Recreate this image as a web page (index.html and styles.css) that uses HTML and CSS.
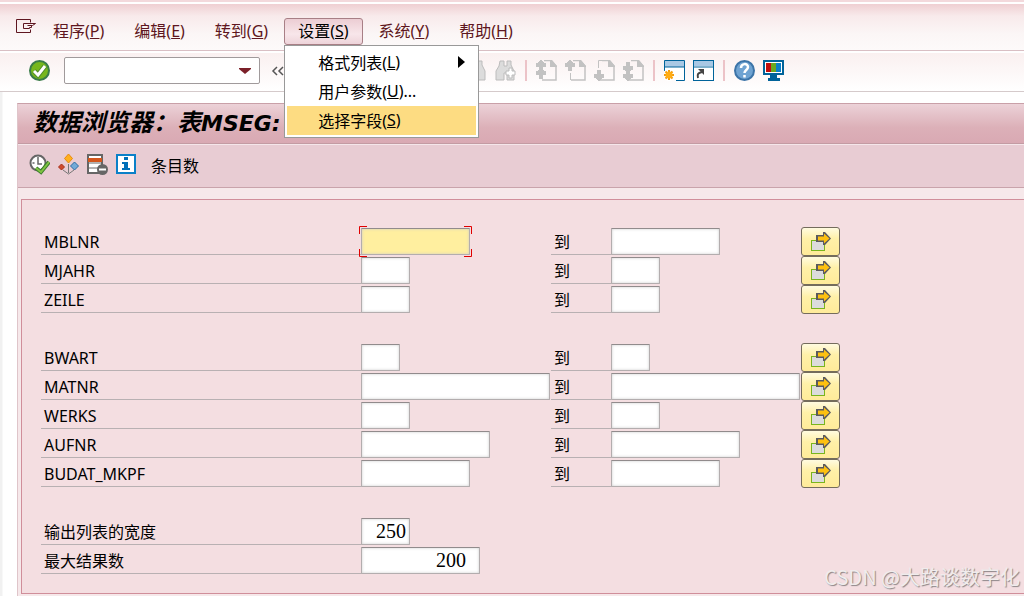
FILE: index.html
```html
<!DOCTYPE html>
<html lang="zh-CN">
<head>
  <meta charset="UTF-8">
  <title>数据浏览器：表MSEG</title>
  <link rel="stylesheet" href="styles.css">
</head>
<body>
  <!-- shared icon shapes -->
  <svg class="defs" aria-hidden="true">
    <symbol id="find" viewBox="0 0 21 21">
      <path d="M5 1h4v5h3V1h4v4l3 6v9h-7v-7H9v7H1v-9l3-5z" fill="#dcdcdc" stroke="#bcbcbc"/>
    </symbol>
    <symbol id="page" viewBox="0 0 21 21">
      <path d="M8 .500h7l5 5.500v14H6" fill="none" stroke="#c2c2c2" stroke-width="1.500"/>
      <path d="M14 0h2l5 6v1h-7z" fill="#c2c2c2"/>
    </symbol>
    <symbol id="arrow-up" viewBox="0 0 10 11">
      <path d="M4 0h2v1h1v1h1v1h2v4H7v4H3V7H0V3h2V2h1V1h1z" fill="#c2c2c2"/>
    </symbol>
    <symbol id="arrow-down" viewBox="0 0 10 11">
      <path d="M4 11h2v-1h1V9h1V8h2V4H7V0H3v4H0v4h2v1h1v1h1z" fill="#c2c2c2"/>
    </symbol>
    <symbol id="multi" viewBox="0 0 20 20">
      <rect x=".500" y="8.500" width="13" height="10" fill="#dcdcdc" stroke="#7ab51d"/>
      <path d="M5 10V3h7V0h2l6 6.500-6 6.500h-2v-3z" fill="#5a5a5f"/>
      <path d="M7 4.500h6V1.500l5.500 5-5.500 5v-3H7z" fill="#fdc010"/>
    </symbol>
  </svg>

  <nav class="menubar">
    <svg class="sys-icon" width="20" height="16" viewBox="0 0 20 16" fill="none" stroke="#5e1620">
      <path d="M14.500 3.500v-3H0.500v13h14v-3M7.500 4.500h12l-3 2h-2M7.500 4.500v5h6v-1h2v-2h-4"/>
    </svg>
    <button class="menu">程序(<u>P</u>)</button>
    <button class="menu">编辑(<u>E</u>)</button>
    <button class="menu">转到(<u>G</u>)</button>
    <div class="menu-wrap">
      <button class="menu open">设置(<u>S</u>)</button>
      <div class="dropdown">
        <button>格式列表(<u>L</u>)
          <svg width="7" height="12" viewBox="0 0 7 12"><path d="M0 0l7 6-7 6z"/></svg>
        </button>
        <button>用户参数(<u>U</u>)...</button>
        <button class="hover">选择字段(<u>S</u>)</button>
      </div>
    </div>
    <button class="menu">系统(<u>Y</u>)</button>
    <button class="menu">帮助(<u>H</u>)</button>
  </nav>

  <div class="toolbar">
    <button class="icon" aria-label="回车">
      <svg viewBox="0 0 21 21"><circle cx="10.500" cy="10.500" r="9.500" fill="#76b71d" stroke="#397c49" stroke-width="2"/><path d="M5 11l4 4 7-9" fill="none" stroke="#4f8c2a" stroke-width="5"/><path d="M5 11l4 4 7-9" fill="none" stroke="#fff" stroke-width="3"/></svg>
    </button>
    <div class="combo">
      <input type="text" aria-label="命令">
      <button aria-label="历史"><svg width="12" height="6" viewBox="0 0 12 6"><path d="M0 0h12v1L6 6 0 1z" fill="#7b2029"/></svg></button>
    </div>
    <button class="collapse" aria-label="收起"><svg width="14" height="10" viewBox="0 0 14 10" fill="none" stroke="#555" stroke-width="1.500"><path d="M6 1L2 5l4 4M12 1L8 5l4 4"/></svg></button>
    <div class="group find-group">
      <button class="icon" disabled aria-label="查找"><svg><use href="#find"/></svg></button>
      <button class="icon" disabled aria-label="查找下一个"><svg viewBox="0 0 21 21"><use href="#find"/><path d="M14 8h3v3h3v4h-3v3h-3v-3h-3v-4h3z" fill="#fff" stroke="#bcbcbc"/></svg></button>
    </div>
    <div class="group">
      <button class="icon" disabled aria-label="第一页"><svg viewBox="0 0 21 21"><use href="#page"/><use href="#arrow-up" width="10" height="11"/><use href="#arrow-up" y="8" width="10" height="11"/></svg></button>
      <button class="icon" disabled aria-label="上一页"><svg viewBox="0 0 21 21"><use href="#page"/><use href="#arrow-up" width="10" height="11"/><path d="M5.500 13v7" stroke="#c2c2c2"/></svg></button>
      <button class="icon" disabled aria-label="下一页"><svg viewBox="0 0 21 21"><use href="#page"/><use href="#arrow-down" y="10" width="10" height="11"/><path d="M4.500 8V.500H9" fill="none" stroke="#c2c2c2"/></svg></button>
      <button class="icon" disabled aria-label="最后一页"><svg viewBox="0 0 21 21"><use href="#page"/><use href="#arrow-down" y="2" width="10" height="11"/><use href="#arrow-down" y="10" width="10" height="11"/></svg></button>
    </div>
    <div class="group">
      <button class="icon" aria-label="新建会话">
        <svg viewBox="0 0 21 21"><rect x=".500" y="1" width="20" height="19" fill="#fff"/><path d="M1 1h19v6H1z" fill="#a9c8e4"/><path d="M.500 11V.500h20v20H12M0 7h20" fill="none" stroke="#00639a"/><circle cx="5" cy="15" r="6" fill="#fff"/><path d="M5 10v10M0 15h10M1.500 11.500l7 7M8.500 11.500l-7 7" stroke="#f49b0b" stroke-width="2"/><circle cx="5" cy="15" r="3.500" fill="#ffad14"/></svg>
      </button>
      <button class="icon" aria-label="创建快捷方式">
        <svg viewBox="0 0 21 21"><rect x=".500" y=".500" width="20" height="20" fill="#fff" stroke="#00639a"/><path d="M1 1h19v5H1z" fill="#a9c8e4"/><path d="M0 7h20" stroke="#00639a"/><path d="M5 18c-1-4 0-5 4-6" fill="none" stroke="#444" stroke-width="2"/><path d="M5 9h6v6z" fill="#444"/></svg>
      </button>
    </div>
    <div class="group">
      <button class="icon" aria-label="帮助">
        <svg viewBox="0 0 21 21"><circle cx="10.500" cy="10.500" r="9.500" fill="#6fa3d2" stroke="#3c74a8" stroke-width="2"/><path d="M7 8c0-5 7-5 7-1 0 3-3.500 3-3.500 6M10.500 15v2.500" fill="none" stroke="#fff" stroke-width="2.500"/></svg>
      </button>
      <button class="icon" aria-label="定制本地布局">
        <svg viewBox="0 0 21 21"><path d="M7 14h7v4h3v3H5v-3h2z" fill="#00639a"/><rect x="1" y="1" width="19" height="13" fill="#fff" stroke="#00639a" stroke-width="2"/><path d="M3 3h5v9H3z" fill="#c00d0d"/><path d="M8 3h5v9H8z" fill="#6aa820"/><path d="M13 3h5v9h-5z" fill="#0a7fc8"/></svg>
      </button>
    </div>
  </div>

  <main class="screen">
    <h1>数据浏览器：表<span>MSEG:</span></h1>

    <div class="app-bar">
      <button class="icon" aria-label="执行">
        <svg viewBox="0 0 21 21"><circle cx="9" cy="9" r="7.500" fill="#fff" stroke="#666" stroke-width="2"/><path d="M9 3v7h4M3.500 9h2" fill="none" stroke="#666" stroke-width="1.500"/><path d="M7 14l5 4 8-10" fill="none" stroke="#397c2c" stroke-width="4"/><path d="M7 14l5 4 8-10" fill="none" stroke="#80c342" stroke-width="2"/></svg>
      </button>
      <button class="icon" aria-label="选择">
        <svg viewBox="0 0 21 21"><path d="M10.500 10v9M5 16l5.500 4 5.500-4" fill="none" stroke="#777"/><path d="M10.500 0l4 4.500-4 4.500-4-4.500z" fill="#ffb01f" stroke="#e8890c"/><path d="M3.500 10l3 3-3 3-3-3z" fill="#d04a2c" stroke="#a8301a"/><path d="M16.500 8l4 4-4 4-4-4z" fill="#72aad8" stroke="#2b6ca3"/></svg>
      </button>
      <button class="icon" aria-label="删除选择行">
        <svg viewBox="0 0 21 21"><path d="M1 1h14v18H1z" fill="#fff" stroke="#666" stroke-width="2"/><path d="M1 4h14v4H1z" fill="#d4561c"/><path d="M1 9h14M1 14h10" stroke="#666" stroke-width="1"/><circle cx="15.500" cy="15.500" r="5.500" fill="#666"/><path d="M12 15.500h7" stroke="#fff" stroke-width="2"/></svg>
      </button>
      <button class="icon" aria-label="信息">
        <svg viewBox="0 0 21 21"><rect x="1" y="1" width="18" height="18" fill="#fff" stroke="#0a80c8" stroke-width="2"/><path d="M8 3h4v3H8zM6 8h6v6h2v2H6v-2h2v-4H6z" fill="#0070b8"/></svg>
      </button>
      <button class="text-btn">条目数</button>
    </div>

    <form class="panel">
      <div class="row">
        <label class="code" for="mblnr">MBLNR</label>
        <div class="field focused">
          <input class="w-date" type="text" id="mblnr">
          <svg class="focus-marks" width="113" height="31" viewBox="0 0 113 31" fill="none" stroke="#e00000"><path d="M8 .500H.500V8M105 .500h7.500V8M8 30.500H.500V23M105 30.500h7.500V23"/></svg>
        </div>
        <label for="mblnr-to">到</label>
        <div class="field"><input class="w-date" type="text" id="mblnr-to"></div>
        <button type="button" class="multi" aria-label="多项选择"><svg><use href="#multi"/></svg></button>
      </div>
      <div class="row">
        <label class="code" for="mjahr">MJAHR</label>
        <div class="field"><input class="w-year" type="text" id="mjahr"></div>
        <label for="mjahr-to">到</label>
        <div class="field"><input class="w-year" type="text" id="mjahr-to"></div>
        <button type="button" class="multi" aria-label="多项选择"><svg><use href="#multi"/></svg></button>
      </div>
      <div class="row">
        <label class="code" for="zeile">ZEILE</label>
        <div class="field"><input class="w-year" type="text" id="zeile"></div>
        <label for="zeile-to">到</label>
        <div class="field"><input class="w-year" type="text" id="zeile-to"></div>
        <button type="button" class="multi" aria-label="多项选择"><svg><use href="#multi"/></svg></button>
      </div>

      <div class="row block-start">
        <label class="code" for="bwart">BWART</label>
        <div class="field"><input class="w-type" type="text" id="bwart"></div>
        <label for="bwart-to">到</label>
        <div class="field"><input class="w-type" type="text" id="bwart-to"></div>
        <button type="button" class="multi" aria-label="多项选择"><svg><use href="#multi"/></svg></button>
      </div>
      <div class="row">
        <label class="code" for="matnr">MATNR</label>
        <div class="field"><input class="w-material" type="text" id="matnr"></div>
        <label for="matnr-to">到</label>
        <div class="field"><input class="w-material" type="text" id="matnr-to"></div>
        <button type="button" class="multi" aria-label="多项选择"><svg><use href="#multi"/></svg></button>
      </div>
      <div class="row">
        <label class="code" for="werks">WERKS</label>
        <div class="field"><input class="w-year" type="text" id="werks"></div>
        <label for="werks-to">到</label>
        <div class="field"><input class="w-year" type="text" id="werks-to"></div>
        <button type="button" class="multi" aria-label="多项选择"><svg><use href="#multi"/></svg></button>
      </div>
      <div class="row">
        <label class="code" for="aufnr">AUFNR</label>
        <div class="field"><input class="w-order" type="text" id="aufnr"></div>
        <label for="aufnr-to">到</label>
        <div class="field"><input class="w-order" type="text" id="aufnr-to"></div>
        <button type="button" class="multi" aria-label="多项选择"><svg><use href="#multi"/></svg></button>
      </div>
      <div class="row">
        <label class="code" for="budat">BUDAT_MKPF</label>
        <div class="field"><input class="w-date" type="text" id="budat"></div>
        <label for="budat-to">到</label>
        <div class="field"><input class="w-date" type="text" id="budat-to"></div>
        <button type="button" class="multi" aria-label="多项选择"><svg><use href="#multi"/></svg></button>
      </div>

      <div class="row block-start">
        <label for="list-width">输出列表的宽度</label>
        <div class="field"><input class="w-year" type="text" id="list-width" value="250"></div>
      </div>
      <div class="row">
        <label for="max-hits">最大结果数</label>
        <div class="field"><input class="w-hits" type="text" id="max-hits" value="200"></div>
      </div>
    </form>
  </main>

  <div class="watermark">CSDN @大路谈数字化</div>
</body>
</html>
```
FILE: styles.css
```css
* {
  box-sizing: border-box;
}
body {
  margin: 0;
  font-family: "Noto Sans", "Noto Sans CJK SC", sans-serif;
  font-size: 16px;
  color: #000;
  background: linear-gradient(90deg, #f1f1f1 2px, #fff 3px);
  border-top: 2px solid #f3d9dc;
}
button, input {
  font: inherit;
  color: inherit;
}
button {
  padding: 0;
  border: 0;
  background: none;
  white-space: nowrap;
}
svg {
  display: block;
}
.defs {
  position: absolute;
  width: 0;
  height: 0;
}

/* menu bar */
.menubar {
  display: flex;
  align-items: center;
  gap: 2px;
  height: 49px;
  padding: 8px 16px 0;
  border-top: 2px solid #fff;
  border-bottom: 1px solid #d9bfc4;
  background: linear-gradient(#efcfd2, #f8eaeb 12px, #fbf6f6 30px, #fdfafa);
}
.sys-icon {
  margin: 0 1px 8px 0;
}
.menu {
  height: 27px;
  padding: 0 13px;
  border: 1px solid transparent;
  border-radius: 3px;
  line-height: 24px;
  color: #5e1620;
}
.menu.open {
  color: #000;
  border-color: #a87f86;
  background: linear-gradient(#eccdd3, #f8e6ea 60%, #eed4da);
}
.menu-wrap {
  position: relative;
}
.dropdown {
  position: absolute;
  z-index: 5;
  top: 27px;
  left: 0;
  width: 195px;
  padding: 2px;
  border: 1px solid #999;
  background: #fff;
}
.dropdown button {
  display: flex;
  align-items: center;
  width: 100%;
  height: 29px;
  padding: 0 11px 0 31px;
}
.dropdown svg {
  margin-left: auto;
}
.dropdown .hover {
  background: #fddc82;
}

/* system toolbar */
.toolbar {
  display: flex;
  align-items: center;
  height: 41px;
  padding: 0 0 3px 29px;
  border-top: 2px solid #fff;
  border-bottom: 1px solid #d5cacb;
  background: linear-gradient(#faf0f0, #fff);
}
.icon, .icon svg {
  width: 21px;
  height: 21px;
}
.combo {
  display: flex;
  align-items: center;
  width: 196px;
  height: 27px;
  margin: 0 11px 0 14px;
  padding-right: 8px;
  border: 1px solid #a09a9b;
  border-radius: 2px;
  background: #fff;
}
.combo input {
  flex: 1;
  min-width: 0;
  border: 0;
  background: none;
}
.group {
  display: flex;
  gap: 8px;
}
.group + .group {
  margin-left: 9px;
  padding-left: 9px;
  border-left: 2px solid #ecc3c8;
  height: 21px;
}
.find-group {
  margin-left: 181px;
}

/* screen */
.screen {
  margin: 11px 0 0 17px;
  padding-bottom: 2px;
  border: 1px solid #c9a0a8;
  border-width: 1px 0 0 1px;
  border-left-color: #dfc5ca;
  background: #f6e8ea;
}
h1 {
  margin: 0;
  height: 40px;
  padding-left: 15px;
  border-bottom: 1px solid #c39ba3;
  font-size: 24px;
  line-height: 36px;
  font-weight: bold;
  font-style: italic;
  background: linear-gradient(#ecd2d8, #dcb0b8 60%, #d9a9b3);
}
h1 span {
  font-family: "DejaVu Sans", sans-serif;
  font-size: 22px;
}
.app-bar {
  display: flex;
  align-items: center;
  gap: 8px;
  height: 44px;
  padding: 0 0 3px 11px;
  border-top: 1px solid #f5e6ea;
  border-bottom: 1px solid #c9a3ab;
  background: #e8ccd3;
}
.text-btn {
  margin-left: 6px;
}
.panel {
  margin: 11px 0 0 3px;
  padding: 27px 0 18px 19px;
  border: 1px solid #d08e9a;
  border-right: 0;
  background: #f4dee1;
}
.row {
  display: grid;
  grid-template-columns: 320px 190px 60px 190px 39px;
  height: 29px;
}
.block-start {
  margin-top: 29px;
}
.row label {
  height: 28px;
  padding: 2px 3px 0;
  line-height: 26px;
  border-bottom: 1px solid #b8b0b2;
}
.row .code {
  line-height: 27px;
}
.field {
  padding-top: 1px;
}
.field input {
  display: block;
  height: 27px;
  padding: 0 3px;
  border: 1px solid #b3adae;
  border-top: 1px solid #918b8c;
  border-radius: 1px;
  background: #fff;
  box-shadow: inset 0 0 3px #ccc;
  font: 20px "Liberation Serif", serif;
  text-align: right;
}
.field .w-type { width: 39px; }
.field .w-year { width: 49px; }
.field .w-date { width: 109px; }
.field .w-order { width: 129px; }
.field .w-material { width: 189px; }
.field .w-hits {
  width: 119px;
  padding-right: 13px;
}
.focused {
  position: relative;
}
.field.focused input {
  background: #ffef9f;
}
.focus-marks {
  position: absolute;
  top: -1px;
  left: -2px;
}
.multi {
  display: flex;
  align-items: center;
  justify-content: center;
  height: 29px;
  border: 1px solid #746c5c;
  border-radius: 3px;
  background: linear-gradient(#fffbe0, #fff0a8 40%, #ffeb9a);
}
.multi svg {
  width: 20px;
  height: 20px;
}

.watermark {
  position: absolute;
  right: 4px;
  bottom: 5px;
  font: 20px/28px "Noto Sans CJK SC", sans-serif;
  color: #f0ecec;
  text-shadow: 1px 1px 1px #8a8486;
}
```
